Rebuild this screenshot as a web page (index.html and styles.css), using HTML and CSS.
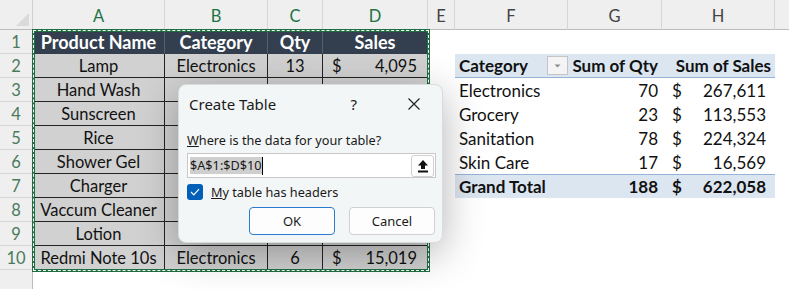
FILE: index.html
```html
<!DOCTYPE html>
<html lang="en">
<head>
  <meta charset="UTF-8">
  <meta name="viewport" content="width=device-width, initial-scale=1.0">
  <title>Create Table</title>
  <link rel="stylesheet" href="styles.css">
</head>
<body>
  <div class="sheet">
    <div class="grid">
      <div class="corner"><span class="corner-tri"></span></div>
      <div class="colhead sel">A</div>
      <div class="colhead sel">B</div>
      <div class="colhead sel">C</div>
      <div class="colhead sel">D</div>
      <div class="colhead">E</div>
      <div class="colhead">F</div>
      <div class="colhead">G</div>
      <div class="colhead">H</div>
      <div class="colhead last"></div>

      <!-- row 1 -->
      <div class="rowhead">1</div>
      <div class="cell head">Product Name</div>
      <div class="cell head">Category</div>
      <div class="cell head">Qty</div>
      <div class="cell head">Sales</div>
      <div class="blank"></div><div class="blank"></div><div class="blank"></div><div class="blank"></div><div class="blank"></div>

      <!-- row 2 -->
      <div class="rowhead">2</div>
      <div class="cell">Lamp</div>
      <div class="cell">Electronics</div>
      <div class="cell">13</div>
      <div class="cell money"><span>$</span><span>4,095</span></div>
      <div class="blank"></div>
      <div class="pv pv-head pv-cat">Category <span class="pv-filter"><svg width="9" height="6" viewBox="0 0 9 6"><path d="M1.5 1.5h6L4.5 4.5z" fill="#8a8a8a"/></svg></span></div>
      <div class="pv pv-head pv-num">Sum of Qty</div>
      <div class="pv pv-head pv-num">Sum of Sales</div>
      <div class="blank"></div>

      <!-- row 3 -->
      <div class="rowhead">3</div>
      <div class="cell">Hand Wash</div>
      <div class="cell"></div>
      <div class="cell"></div>
      <div class="cell"></div>
      <div class="blank"></div>
      <div class="pv">Electronics</div>
      <div class="pv pv-num">70</div>
      <div class="pv pv-money"><span>$</span><span>267,611</span></div>
      <div class="blank"></div>

      <!-- row 4 -->
      <div class="rowhead">4</div>
      <div class="cell">Sunscreen</div>
      <div class="cell"></div>
      <div class="cell"></div>
      <div class="cell"></div>
      <div class="blank"></div>
      <div class="pv">Grocery</div>
      <div class="pv pv-num">23</div>
      <div class="pv pv-money"><span>$</span><span>113,553</span></div>
      <div class="blank"></div>

      <!-- row 5 -->
      <div class="rowhead">5</div>
      <div class="cell">Rice</div>
      <div class="cell"></div>
      <div class="cell"></div>
      <div class="cell"></div>
      <div class="blank"></div>
      <div class="pv">Sanitation</div>
      <div class="pv pv-num">78</div>
      <div class="pv pv-money"><span>$</span><span>224,324</span></div>
      <div class="blank"></div>

      <!-- row 6 -->
      <div class="rowhead">6</div>
      <div class="cell">Shower Gel</div>
      <div class="cell"></div>
      <div class="cell"></div>
      <div class="cell"></div>
      <div class="blank"></div>
      <div class="pv">Skin Care</div>
      <div class="pv pv-num">17</div>
      <div class="pv pv-money"><span>$</span><span>16,569</span></div>
      <div class="blank"></div>

      <!-- row 7 -->
      <div class="rowhead">7</div>
      <div class="cell">Charger</div>
      <div class="cell"></div>
      <div class="cell"></div>
      <div class="cell"></div>
      <div class="blank"></div>
      <div class="pv pv-total">Grand Total</div>
      <div class="pv pv-total pv-num">188</div>
      <div class="pv pv-total pv-money"><span>$</span><span>622,058</span></div>
      <div class="blank"></div>

      <!-- row 8 -->
      <div class="rowhead">8</div>
      <div class="cell">Vaccum Cleaner</div>
      <div class="cell"></div>
      <div class="cell"></div>
      <div class="cell"></div>
      <div class="blank"></div><div class="blank"></div><div class="blank"></div><div class="blank"></div><div class="blank"></div>

      <!-- row 9 -->
      <div class="rowhead">9</div>
      <div class="cell">Lotion</div>
      <div class="cell"></div>
      <div class="cell"></div>
      <div class="cell"></div>
      <div class="blank"></div><div class="blank"></div><div class="blank"></div><div class="blank"></div><div class="blank"></div>

      <!-- row 10 -->
      <div class="rowhead">10</div>
      <div class="cell">Redmi Note 10s</div>
      <div class="cell">Electronics</div>
      <div class="cell">6</div>
      <div class="cell money"><span>$</span><span>15,019</span></div>
      <div class="blank"></div><div class="blank"></div><div class="blank"></div><div class="blank"></div><div class="blank"></div>

      <div class="rowhead empty"></div>
    </div>

    <div class="marquee"></div>

    <div class="dialog">
      <div class="dlg-title">
        <span>Create Table</span>
        <span class="dlg-help">?</span>
        <svg class="dlg-close" width="14" height="14" viewBox="0 0 14 14"><path d="M1.5 1.5l11 11M12.5 1.5l-11 11" stroke="#222" stroke-width="1.2"/></svg>
      </div>
      <div class="dlg-body">
        <div class="dlg-label"><u>W</u>here is the data for your table?</div>
        <div class="dlg-input">
          <span class="range"><span class="range-sel">$A$1:$D$10</span><span class="caret"></span></span>
          <span class="collapse-btn"><svg width="12" height="14" viewBox="0 0 12 14"><path d="M6 1L1 6.5h3V10h4V6.5h3z" fill="#111"/><rect x="1" y="11.5" width="10" height="2" fill="#111"/></svg></span>
        </div>
        <label class="dlg-check">
          <span class="box"><svg width="10" height="8" viewBox="0 0 10 8"><path d="M1 4l2.8 2.8L9 1.2" fill="none" stroke="#fff" stroke-width="1.2"/></svg></span>
          <span><u>M</u>y table has headers</span>
        </label>
        <div class="dlg-buttons">
          <button class="btn primary">OK</button>
          <button class="btn">Cancel</button>
        </div>
      </div>
    </div>
  </div>
</body>
</html>
```

FILE: styles.css
```css
* {
  box-sizing: border-box;
}
body {
  margin: 0;
  background: #fff;
  font-family: 'Lato', 'Liberation Sans', sans-serif;
  overflow: hidden;
}
.sheet {
  position: relative;
  width: 789px;
  height: 289px;
  background: #fff;
}
.grid {
  display: grid;
  grid-template-columns: 33px 132px 103px 55px 105px 27px 113px 94px 113px 1fr;
  grid-template-rows: 30px repeat(10, 24px) 1fr;
  height: 289px;
}
.corner {
  background: #efefef;
  border-bottom: 1px solid #bcbcbc;
  border-right: 1px solid #d0d0d0;
  position: relative;
}
.corner-tri {
  position: absolute;
  right: 3px;
  bottom: 3px;
  width: 0;
  height: 0;
  border-left: 13px solid transparent;
  border-bottom: 13px solid #dadada;
}
.colhead {
  background: #efefef;
  border-bottom: 1px solid #bcbcbc;
  border-right: 1px solid #d6d6d6;
  color: #444;
  font-size: 16.5px;
  display: flex;
  align-items: center;
  justify-content: center;
  padding-top: 2px;
}
.colhead.sel {
  color: #217346;
}
.colhead.last {
  border-right: none;
}
.rowhead {
  background: #efefef;
  border-right: 1px solid #bcbcbc;
  border-bottom: 1px solid #d6d6d6;
  color: #4a7a5e;
  font-size: 16.5px;
  display: flex;
  align-items: center;
  justify-content: center;
}
.rowhead.empty {
  border-bottom: none;
}
.blank {
  background: #fff;
}
.cell {
  background: #d1d1d1;
  border-right: 1px solid #222;
  border-bottom: 1px solid #222;
  color: #111;
  font-size: 16.5px;
  display: flex;
  align-items: center;
  justify-content: center;
  white-space: nowrap;
}
.cell.head {
  background: #333f4f;
  color: #fff;
  font-weight: bold;
  font-size: 18px;
  border-color: #333f4f;
  border-right-color: #56606d;
}
.cell.money {
  justify-content: space-between;
  padding: 0 10px 0 9px;
}
.pv {
  font-size: 17px;
  color: #111;
  display: flex;
  align-items: center;
  padding: 0 4px;
  white-space: nowrap;
}
.pv-head {
  background: #dce6f1;
  border-bottom: 1px solid #95b3d7;
  font-weight: bold;
}
.pv-cat {
  justify-content: space-between;
  padding-right: 0;
}
.pv-filter {
  width: 21px;
  height: 19px;
  border: 1px solid #c4c4c4;
  background: #f4f4f4;
  display: flex;
  align-items: center;
  justify-content: center;
}
.pv-num {
  justify-content: flex-end;
}
.pv-money {
  justify-content: space-between;
  padding: 0 9px 0 10px;
}
.pv-total {
  background: #dce6f1;
  border-top: 1px solid #95b3d7;
  font-weight: bold;
}
.marquee {
  position: absolute;
  left: 32px;
  top: 29px;
  width: 398px;
  height: 243px;
  border: 3px solid #1f6e43;
  pointer-events: none;
}
.marquee::after {
  content: '';
  position: absolute;
  inset: -2px;
  border: 1px dashed #fff;
}
.dialog {
  position: absolute;
  left: 178px;
  top: 84px;
  width: 265px;
  height: 159px;
  background: #f3f6f6;
  border: 1px solid #d8dcdc;
  border-radius: 8px;
  box-shadow: 0 10px 40px rgba(0, 0, 0, 0.3);
  font-family: 'Noto Sans', 'Open Sans', sans-serif;
  color: #1a1a1a;
}
.dlg-title {
  display: flex;
  align-items: center;
  height: 38px;
  padding: 0 21px 0 10px;
  font-size: 15px;
}
.dlg-help {
  margin-left: auto;
  margin-right: 50px;
  font-size: 15px;
}
.dlg-body {
  padding: 8px 6px 0 8px;
  font-size: 12.7px;
}
.dlg-label {
  line-height: 18px;
}
.dlg-input {
  margin-top: 4px;
  height: 25px;
  background: #fff;
  border: 1px solid #c8c8c8;
  display: flex;
  align-items: center;
  justify-content: space-between;
  padding-left: 2px;
}
.range {
  display: flex;
  align-items: center;
}
.range-sel {
  background: #cfcfcf;
  line-height: 17px;
}
.caret {
  width: 1px;
  height: 18px;
  background: #000;
}
.collapse-btn {
  width: 23px;
  height: 22px;
  margin-right: 1px;
  border: 1px solid #d0d0d0;
  border-radius: 3px;
  background: #fdfdfd;
  display: flex;
  align-items: center;
  justify-content: center;
}
.dlg-check {
  display: flex;
  align-items: center;
  gap: 8px;
  margin-top: 5px;
  height: 18px;
}
.box {
  width: 16px;
  height: 16px;
  border-radius: 3px;
  background: #005fb8;
  display: flex;
  align-items: center;
  justify-content: center;
}
.dlg-buttons {
  display: flex;
  justify-content: flex-end;
  gap: 14px;
  margin-top: 6px;
  padding-right: 1px;
}
.btn {
  width: 86px;
  height: 28px;
  font-family: 'Noto Sans', 'Open Sans', sans-serif;
  font-size: 13px;
  background: #fdfdfd;
  border: 1px solid #d0d0d0;
  border-radius: 4px;
  color: #1a1a1a;
}
.btn.primary {
  border: 1px solid #2a7bd0;
}
```
